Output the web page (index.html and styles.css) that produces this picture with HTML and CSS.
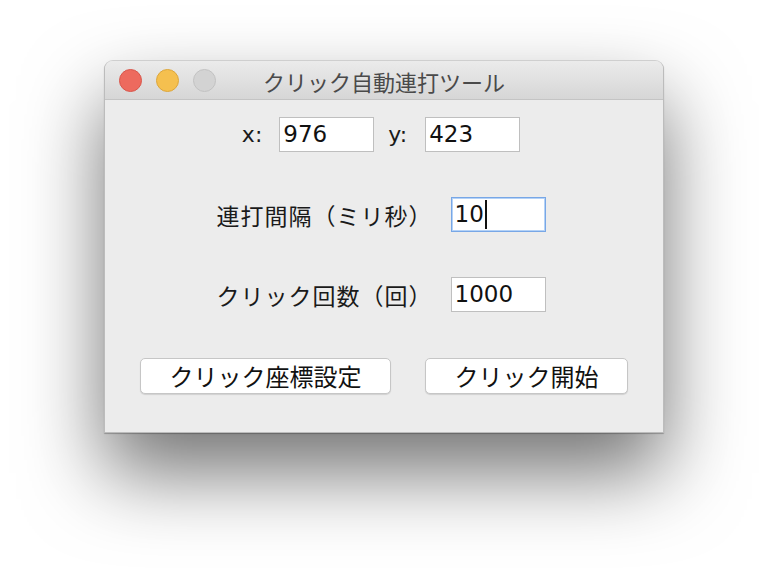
FILE: index.html
```html
<!DOCTYPE html>
<html lang="ja">
<head>
<meta charset="utf-8">
<title>クリック自動連打ツール</title>
<link rel="stylesheet" href="styles.css">
</head>
<body>
<div class="window">
  <div class="titlebar">
    <div class="lights">
      <span class="light close"></span>
      <span class="light min"></span>
      <span class="light zoom"></span>
    </div>
    <div class="title">クリック自動連打ツール</div>
    <div></div>
  </div>
  <div class="content">
    <div class="row row-xy">
      <span class="lbl lbl-x">x:</span>
      <div class="field">976</div>
      <span class="lbl lbl-y">y:</span>
      <div class="field">423</div>
    </div>
    <div class="row row-form">
      <span class="lbl jp">連打間隔（ミリ秒）</span>
      <div class="field focused">10<span class="caret"></span></div>
    </div>
    <div class="row row-form">
      <span class="lbl jp">クリック回数（回）</span>
      <div class="field">1000</div>
    </div>
    <div class="row row-buttons">
      <button class="btn btn-wide">クリック座標設定</button>
      <button class="btn btn-narrow">クリック開始</button>
    </div>
  </div>
</div>
</body>
</html>
```
FILE: styles.css
```css
html, body {
  margin: 0;
  padding: 0;
}
body {
  width: 768px;
  height: 582px;
  background: #ffffff;
  display: flex;
  justify-content: center;
  align-items: flex-start;
  padding-top: 60px;
  box-sizing: border-box;
  overflow: hidden;
  font-family: "DejaVu Sans", "Noto Sans CJK JP", sans-serif;
}
.window {
  width: 560px;
  height: 373px;
  box-sizing: border-box;
  border: 1px solid #bcbcbc;
  border-top-color: #cfcfcf;
  border-radius: 9px 9px 1px 1px;
  background: #ececec;
  box-shadow: 0 1px 1px rgba(0,0,0,0.25), 0 40px 80px rgba(0,0,0,0.55);
  display: flex;
  flex-direction: column;
  overflow: hidden;
}
.titlebar {
  height: 39px;
  box-sizing: border-box;
  border-bottom: 1px solid #c4c4c4;
  background: linear-gradient(#ebebeb, #d6d6d6);
  display: grid;
  grid-template-columns: 1fr auto 1fr;
  align-items: center;
  flex: none;
}
.lights {
  display: flex;
  gap: 14px;
  padding-left: 14px;
  align-items: center;
}
.light {
  width: 23px;
  height: 23px;
  box-sizing: border-box;
  border-radius: 50%;
  display: block;
}
.close { background: #ed6a5e; border: 1px solid #d8574c; }
.min { background: #f5c04f; border: 1px solid #dca63c; }
.zoom { background: #d3d3d3; border: 1px solid #c2c2c2; }
.title {
  font-family: "Noto Sans CJK JP", sans-serif;
  font-size: 22px;
  line-height: 26px;
  color: #4a4a4a;
  padding-top: 1px;
}
.content {
  flex: 1;
  display: flex;
  flex-direction: column;
  align-items: center;
  padding-top: 17px;
  gap: 45px;
}
.row {
  display: flex;
  align-items: center;
  height: 35px;
}
.row-xy, .row-form {
  margin-right: 6px;
}
.row-buttons {
  height: 36px;
  margin-top: 1px;
  gap: 34px;
}
.lbl {
  font-size: 22px;
  line-height: 26px;
  color: #1a1a1a;
}
.jp {
  font-family: "Noto Sans CJK JP", sans-serif;
  font-size: 23px;
  letter-spacing: 1px;
}
.lbl-x { margin-right: 17px; }
.lbl-y { margin-left: 14px; margin-right: 18px; }
.row-form .lbl { margin-right: 18px; }
.field {
  width: 95px;
  height: 35px;
  box-sizing: border-box;
  background: #ffffff;
  border: 1px solid #bfbfbf;
  font-family: "DejaVu Sans", sans-serif;
  font-size: 23px;
  line-height: 33px;
  color: #111111;
  padding-left: 3px;
  display: flex;
  align-items: center;
}
.field.focused {
  border: 1px solid #78a7e6;
  box-shadow: inset 0 0 0 1px #b4d2f7;
}
.caret {
  display: inline-block;
  width: 2px;
  height: 29px;
  background: #111;
  margin-left: 1px;
}
.btn {
  height: 36px;
  box-sizing: border-box;
  background: #ffffff;
  border: 1px solid #c6c6c6;
  border-radius: 5px;
  box-shadow: 0 1px 1px rgba(0,0,0,0.12);
  font-family: "Noto Sans CJK JP", sans-serif;
  font-size: 24px;
  line-height: 30px;
  color: #111111;
  padding: 0;
  margin: 0;
}
.btn-wide { width: 251px; }
.btn-narrow { width: 203px; }
```
